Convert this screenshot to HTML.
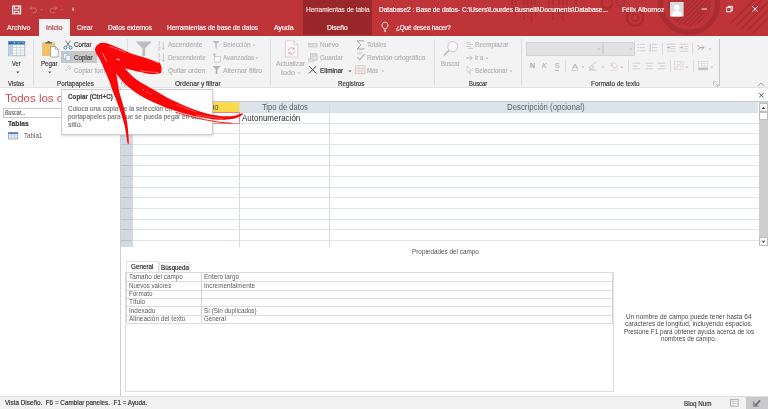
<!DOCTYPE html>
<html lang="es"><head><meta charset="utf-8"><title>Access</title>
<style>
html,body{margin:0;padding:0;background:#fff;}
body{width:768px;height:409px;overflow:hidden;font-family:"Liberation Sans",sans-serif;}
#clip{position:relative;width:768px;height:409px;overflow:hidden;background:#fff;}
#app{position:absolute;left:-8px;top:-8px;width:784px;height:425px;background:#fff;filter:blur(0.35px);}
#stage{left:8px;top:8px;width:768px;height:409px;}
#app div,#app svg,#app span{position:absolute;}
.t{white-space:pre;transform-origin:0 50%;z-index:2;-webkit-text-stroke:0.18px currentColor;}
#titlebar{left:-8px;top:-8px;width:784px;height:44px;background:#BE3438;}
#ctx{left:302.6px;top:-8px;width:69.8px;height:43.4px;background:#99272A;}
#tabsel{left:39px;top:19.3px;width:30.6px;height:17px;background:#F3F3F3;}
#ribbon{left:-8px;top:36px;width:784px;height:51.4px;background:#F3F3F3;border-bottom:1px solid #e2e2e2;}
.vsep{width:1px;top:39px;height:46px;background:#dedede;}
.t.l{-webkit-text-stroke:0;}
.hl{background:#c8c8c8;}
.combo{background:#e2e2e2;border:0.6px solid #d3d3d3;box-sizing:border-box;}
#status{left:-8px;top:396.2px;width:784px;height:20.8px;background:#F1F1F1;border-top:1px solid #dedede;box-sizing:border-box;}
#tooltip{left:61.3px;top:88.7px;width:151.6px;height:46px;background:#fff;border:0.7px solid #cdcdcd;box-sizing:border-box;box-shadow:0.5px 1px 2.2px rgba(0,0,0,0.17);z-index:3;}
#arrow{left:0;top:0;z-index:6;}
.rowl{left:131.8px;width:627px;height:1px;background:#dfe5ee;}
.pr{left:126.6px;width:486px;height:1px;background:#dcdcdc;}

</style></head>
<body>
<div id="clip"><div id="app"><div id="stage">
<div id="titlebar"></div>
<svg id="deco" width="768" height="36" viewBox="0 0 768 36" style="left:0;top:0">
<defs><pattern id="h" width="3.2" height="3.2" patternUnits="userSpaceOnUse" patternTransform="rotate(45)"><rect width="1.7" height="3.2" fill="#a62b30"/></pattern>
<clipPath id="cp"><rect x="0" y="0" width="768" height="36"/></clipPath></defs>
<g clip-path="url(#cp)" opacity="0.8">
<circle cx="689" cy="4" r="28.4" fill="none" stroke="#a62b30" stroke-width="5.4"/>
<circle cx="689" cy="4" r="22" fill="url(#h)"/>
<circle cx="635" cy="17.6" r="8.2" fill="none" stroke="#a62b30" stroke-width="2.4"/>
<circle cx="635" cy="17.6" r="3.4" fill="none" stroke="#a62b30" stroke-width="1.6"/>
<circle cx="620.5" cy="2" r="4" fill="none" stroke="#a62b30" stroke-width="1"/>
<path d="M731 23 L754 0 M736 26 L762 0 M741 29 L768 2 M747 31 L768 10 M753 33 L768 18" stroke="#a62b30" stroke-width="1.7" fill="none"/>
<path d="M512 0V12 M515.4 0V17 M524 0V20 M527.6 0V13 M531.4 0V22 M535.4 0V16 M549 0V13 M553 0V20 M559 0V15 M563 0V21 M567 0V11 M576 0V9" stroke="#a62b30" stroke-width="1.5" fill="none" stroke-dasharray="5 1.2 9 1.2"/>
<circle cx="607" cy="3" r="5.4" fill="none" stroke="#a62b30" stroke-width="1.6"/>
</g></svg>
<div id="ctx"></div>
<div id="tabsel"></div>
<svg width="80" height="20" viewBox="0 0 80 20" style="left:0;top:0">
<g fill="none" stroke="#fff" stroke-width="1.1">
<rect x="12.6" y="6" width="8" height="7.8"/>
<path d="M14.4 6v3h4.4v-3 M14.4 13.8v-2.6h4.4v2.6"/>
</g>
<g fill="none" stroke="#cf7378" stroke-width="0.9">
<path d="M30 8.2h4.2a2.3 2.3 0 0 1 0 4.6h-2.4 M31.8 6.2l-2 2 2 2"/>
<path d="M56.6 8.2h-4.2a2.3 2.3 0 0 0 0 4.6h2.4 M54.8 6.2l2 2-2 2"/>
</g>
<path d="M40.4 9.2l1.2 1.3 1.2-1.3z M60.6 9.2l1.2 1.3 1.2-1.3z" fill="#cf7378"/>
<path d="M72.2 8.2h2" stroke="#fff" stroke-width="0.7"/>
<path d="M72 9.4l1.2 1.5 1.2-1.5z" fill="#fff"/>
</svg>
<svg width="10" height="12" viewBox="0 0 10 12" style="left:380.4px;top:21.4px">
<path d="M5 1.2a3 3 0 0 1 1.7 5.5c-.3.3-.5.8-.5 1.3H3.8c0-.5-.2-1-.5-1.3A3 3 0 0 1 5 1.2z M3.9 9.4h2.2 M4.2 10.6h1.6" fill="none" stroke="#fff" stroke-width="0.8"/>
</svg>
<svg width="14" height="15" viewBox="0 0 14 15" style="left:670.4px;top:1.6px">
<rect x="0" y="0" width="13.6" height="14.4" fill="#dcdcdc"/>
<circle cx="6.8" cy="5.4" r="2.6" fill="#fff"/>
<path d="M1.8 14.4c0-4 2.2-5.6 5-5.6s5 1.6 5 5.6z" fill="#fff"/>
</svg>
<svg width="70" height="18" viewBox="0 0 70 18" style="left:698px;top:0">
<g fill="none" stroke="#fff" stroke-width="0.9">
<path d="M3.6 9h5.4"/>
<rect x="28.6" y="7.6" width="4.4" height="4.2"/>
<path d="M30 7.6v-1.3h4.4v4.2h-1.4"/>
<path d="M54.4 6.4l5.2 5.2 M59.6 6.4l-5.2 5.2"/>
</g></svg>
<div id="ribbon"></div>
<div class="vsep" style="left:32.7px"></div>
<div class="vsep" style="left:126.7px"></div>
<div class="vsep" style="left:269.7px"></div>
<div class="vsep" style="left:434.0px"></div>
<div class="vsep" style="left:521.0px"></div>
<div class="vsep" style="left:719.2px;background:#c9c9c9;top:38.5px;height:47px"></div>
<div class="hl" style="left:61.3px;top:51px;width:35.4px;height:12.3px"></div>
<svg width="18" height="16" viewBox="0 0 18 16" style="left:7.8px;top:41px">
<rect x="0.4" y="0.4" width="16.4" height="14.4" fill="#fdfdfd" stroke="#8fa3b8" stroke-width="0.7"/>
<rect x="0.4" y="3.4" width="4.2" height="11.4" fill="#c3d3e6"/>
<rect x="0.4" y="0.4" width="16.4" height="3.2" fill="#2d72b4"/>
<path d="M0.4 6.4h16.4 M0.4 9.2h16.4 M0.4 12h16.4 M4.6 3.6v11.2 M8.6 3.6v11.2 M12.8 3.6v11.2" stroke="#b4c0cc" stroke-width="0.6" fill="none"/>
<path d="M5.6 1.2l1 1.3 1-1.3z M9.8 1.2l1 1.3 1-1.3z M14 1.2l1 1.3 1-1.3z" fill="#cfe0f2"/>
</svg>
<svg width="6" height="4" viewBox="0 0 6 4" style="left:14.6px;top:71.2px"><path d="M1.2 0.6l1.6 1.9 1.6-1.9z" fill="#555"/></svg>
<svg width="18" height="18" viewBox="0 0 18 18" style="left:42.2px;top:39.8px">
<rect x="0.6" y="2.8" width="11.8" height="13" fill="#f4c266" stroke="#e0aa48" stroke-width="0.4"/>
<path d="M3.2 3.4v-1.2h2c0-1.7 2.8-1.7 2.8 0h2v1.2z" fill="#5f5f5f"/>
<path d="M8.6 6.4h4.8l2.8 2.8v7.8h-7.6z" fill="#fff" stroke="#8c8c8c" stroke-width="0.7"/>
<path d="M13.4 6.4v2.8h2.8" fill="none" stroke="#8c8c8c" stroke-width="0.7"/>
</svg>
<svg width="6" height="4" viewBox="0 0 6 4" style="left:47px;top:71.2px"><path d="M1.2 0.6l1.6 1.9 1.6-1.9z" fill="#555"/></svg>
<svg width="10" height="10" viewBox="0 0 10 10" style="left:62.6px;top:39.8px">
<path d="M2.6 0.6l4 6 M7.4 0.6l-4 6" stroke="#555" stroke-width="0.8" fill="none"/>
<circle cx="2.4" cy="7.6" r="1.5" fill="none" stroke="#2f79c0" stroke-width="0.9"/>
<circle cx="7.6" cy="7.6" r="1.5" fill="none" stroke="#2f79c0" stroke-width="0.9"/>
</svg>
<svg width="10" height="10" viewBox="0 0 10 10" style="left:63.2px;top:52.8px">
<rect x="0.6" y="0.6" width="3.8" height="4.8" fill="#e9f2fb" stroke="#8cb0d8" stroke-width="0.6"/>
<rect x="3" y="2.4" width="4.2" height="5.2" fill="#f1f7fd" stroke="#8cb0d8" stroke-width="0.6"/>
</svg>
<svg width="10" height="10" viewBox="0 0 10 10" style="left:64px;top:65.4px">
<path d="M1.4 6l2.4-2.4 M3.6 2.4l2 2 1.6-1.6-2-2z" fill="none" stroke="#c4c4c4" stroke-width="0.9"/>
</svg>
<svg width="6" height="6" viewBox="0 0 6 6" style="left:120.6px;top:81px"><path d="M0.6 3.6v-3h3 M2.4 2.4l2.6 2.6 M5.2 3v2.2h-2.2" fill="none" stroke="#9a9a9a" stroke-width="0.6"/></svg>
<svg width="6" height="6" viewBox="0 0 6 6" style="left:713.2px;top:81px"><path d="M0.6 3.6v-3h3 M2.4 2.4l2.6 2.6 M5.2 3v2.2h-2.2" fill="none" stroke="#9a9a9a" stroke-width="0.6"/></svg>
<svg width="18" height="16" viewBox="0 0 18 16" style="left:135px;top:40.6px">
<path d="M0.8 0.6h16l-6.6 6.6v7.8h-2.8v-7.8z" fill="#bdbdbd"/>
</svg>
<svg width="9" height="10" viewBox="0 0 9 10" style="left:157.4px;top:40.6px">
<path d="M1.4 0.8h1.6 M1.4 3.6h1.6 M2.2 0.8v2.8 M1.2 6h2l-2 3h2" stroke="#c2c2c2" stroke-width="0.7" fill="none"/>
<path d="M6.4 0.6v7.6 M5 6.8l1.4 1.8 1.4-1.8" stroke="#c2c2c2" stroke-width="0.8" fill="none"/>
</svg>
<svg width="9" height="10" viewBox="0 0 9 10" style="left:157.4px;top:53.4px">
<path d="M1.4 0.8h1.6 M1.4 3.6h1.6 M2.2 0.8v2.8 M1.2 6h2l-2 3h2" stroke="#c2c2c2" stroke-width="0.7" fill="none"/>
<path d="M6.4 0.6v7.6 M5 6.8l1.4 1.8 1.4-1.8" stroke="#c2c2c2" stroke-width="0.8" fill="none"/>
</svg>
<svg width="9" height="10" viewBox="0 0 9 10" style="left:157.4px;top:66px">
<path d="M1.6 4.2l5-2.6 M2.4 6.4l4 0" stroke="#c8c8c8" stroke-width="0.8" fill="none"/></svg>
<svg width="10" height="10" viewBox="0 0 10 10" style="left:212px;top:39.8px"><path d="M0.6 1h7l-2.8 3v4.6h-1.4v-4.6z" fill="#bdbdbd"/><path d="M7 6.6l1.6-3" stroke="#c8c8c8" stroke-width="0.7"/></svg>
<svg width="10" height="10" viewBox="0 0 10 10" style="left:212px;top:52.6px"><path d="M0.4 0.8h4l-1.5 1.6v1.8h-1v-1.8z" fill="#bdbdbd"/><rect x="2.6" y="3.6" width="6" height="5.4" fill="#f6f6f6" stroke="#c2c2c2" stroke-width="0.7"/></svg>
<svg width="10" height="10" viewBox="0 0 10 10" style="left:212px;top:65.4px"><path d="M0.6 1h8l-3.2 3.4v4.6h-1.6v-4.6z" fill="#b4b4b4"/></svg>
<svg width="4" height="3" viewBox="0 0 4 3" style="left:251.8px;top:43.8px"><path d="M0.4 0.4l1.5 1.8 1.5-1.8z" fill="#c0c0c0"/></svg>
<svg width="4" height="3" viewBox="0 0 4 3" style="left:255.4px;top:56.7px"><path d="M0.4 0.4l1.5 1.8 1.5-1.8z" fill="#c0c0c0"/></svg>
<svg width="4" height="3" viewBox="0 0 4 3" style="left:297.1px;top:71.8px"><path d="M0.4 0.4l1.5 1.8 1.5-1.8z" fill="#c0c0c0"/></svg>
<svg width="4" height="3" viewBox="0 0 4 3" style="left:348.3px;top:69.7px"><path d="M0.4 0.4l1.5 1.8 1.5-1.8z" fill="#555"/></svg>
<svg width="4" height="3" viewBox="0 0 4 3" style="left:380.5px;top:69.7px"><path d="M0.4 0.4l1.5 1.8 1.5-1.8z" fill="#c0c0c0"/></svg>
<svg width="4" height="3" viewBox="0 0 4 3" style="left:484.8px;top:56.7px"><path d="M0.4 0.4l1.5 1.8 1.5-1.8z" fill="#c0c0c0"/></svg>
<svg width="4" height="3" viewBox="0 0 4 3" style="left:508.7px;top:69.7px"><path d="M0.4 0.4l1.5 1.8 1.5-1.8z" fill="#c0c0c0"/></svg>
<svg width="16" height="18" viewBox="0 0 16 18" style="left:284px;top:39.8px">
<path d="M1.4 0.8h8.4l4 4v12.2h-12.4z" fill="#fbf7f8" stroke="#d9c3c6" stroke-width="0.7"/>
<path d="M9.8 0.8v4h4" fill="none" stroke="#d9c3c6" stroke-width="0.7"/>
<path d="M4.6 10.6a3 3 0 0 1 5.4-1.6 M10.6 11.2a3 3 0 0 1-5.4 1.6 M10.2 7.4v1.8h-1.8 M5 14.4v-1.8h1.8" fill="none" stroke="#c9a9ad" stroke-width="0.9"/>
</svg>
<svg width="10" height="10" viewBox="0 0 10 10" style="left:308.4px;top:39.8px"><rect x="0.6" y="3.4" width="8.4" height="3.6" fill="#e2e2e2" stroke="#c2c2c2" stroke-width="0.6"/><path d="M2 3.4v3.6 M5 3.4v3.6" stroke="#c2c2c2" stroke-width="0.5"/></svg>
<svg width="10" height="10" viewBox="0 0 10 10" style="left:308.4px;top:52.6px"><rect x="2.6" y="0.8" width="6.4" height="6.4" fill="#e6e6e6" stroke="#bbb" stroke-width="0.7"/><rect x="0.6" y="5.6" width="4.6" height="3.4" fill="#ddd" stroke="#c6c6c6" stroke-width="0.5"/><path d="M4.4 0.8v2.4h3v-2.4" fill="none" stroke="#bbb" stroke-width="0.6"/></svg>
<svg width="10" height="10" viewBox="0 0 10 10" style="left:308.4px;top:65.4px"><path d="M1 1.2l7.2 7.2 M8.2 1.2l-7.2 7.2" stroke="#444" stroke-width="1" fill="none"/></svg>
<svg width="10" height="10" viewBox="0 0 10 10" style="left:355.8px;top:39.8px"><path d="M8 1.6v-0.8h-6.8l3.6 4-3.6 4.2h6.8v-0.8" fill="none" stroke="#9c9c9c" stroke-width="0.9"/></svg>
<svg width="10" height="11" viewBox="0 0 10 11" style="left:356px;top:51.4px"><path d="M1.6 6.2l2.2 2.6 4.6-5.6" fill="none" stroke="#b0b0b0" stroke-width="1.1"/><path d="M1.4 1.2h1 M3.4 1.2h1 M5.4 1.2h1 M1.4 2.8h5" stroke="#c2c2c2" stroke-width="0.7"/></svg>
<svg width="11" height="10" viewBox="0 0 11 10" style="left:355.4px;top:65.2px"><rect x="0.6" y="0.8" width="9.4" height="8" fill="#f8f0f0" stroke="#c9b9ba" stroke-width="0.6"/><path d="M0.6 3.4h9.4 M0.6 6h9.4 M3.8 0.8v8 M7 0.8v8" stroke="#c9b9ba" stroke-width="0.5"/></svg>
<svg width="18" height="18" viewBox="0 0 18 18" style="left:441.6px;top:39.6px">
<circle cx="10.8" cy="6.6" r="5" fill="#fbf6f7" stroke="#c9bfc0" stroke-width="0.9"/>
<path d="M7 10.4l-5 5" stroke="#b9b9b9" stroke-width="1.5" fill="none"/>
</svg>
<svg width="9" height="10" viewBox="0 0 9 10" style="left:464.6px;top:39.8px"><path d="M1 2.4h5 M2 4.4h6 M1 6.6h5 M3 8.4h5" stroke="#c0c0c0" stroke-width="0.8"/></svg>
<svg width="9" height="10" viewBox="0 0 9 10" style="left:464.6px;top:52.6px"><path d="M1 5h6 M4.8 2.6l2.4 2.4-2.4 2.4" stroke="#b4b4b4" stroke-width="0.9" fill="none"/></svg>
<svg width="9" height="10" viewBox="0 0 9 10" style="left:464.6px;top:65.4px"><path d="M2 1l0 6.4 1.6-1.4 1.2 2.8 1-.4-1.2-2.8h2.2z" fill="#fafafa" stroke="#c0c0c0" stroke-width="0.6"/></svg>
<div class="combo" style="left:525.8px;top:41.6px;width:77px;height:14.2px"></div>
<div class="combo" style="left:603.4px;top:41.6px;width:31.2px;height:14.2px"></div>
<svg width="4" height="3" viewBox="0 0 4 3" style="left:596.7px;top:47.9px"><path d="M0.4 0.4l1.5 1.8 1.5-1.8z" fill="#c0c0c0"/></svg>
<svg width="4" height="3" viewBox="0 0 4 3" style="left:628.7px;top:47.9px"><path d="M0.4 0.4l1.5 1.8 1.5-1.8z" fill="#c0c0c0"/></svg>
<div style="left:554.6px;top:69.8px;width:4.8px;height:0.6px;background:#b8b8b8"></div>
<div style="left:571.4px;top:70.2px;width:7px;height:1px;background:#dccfcf"></div>
<svg width="9" height="10" viewBox="0 0 9 10" style="left:637px;top:43.2px"><path d="M0.6 1.4h1.2 M0.6 4.6h1.2 M0.6 7.8h1.2" stroke="#b8b8b8" stroke-width="1"/><path d="M3 1.4h5 M3 4.6h5 M3 7.8h5" stroke="#c6c6c6" stroke-width="0.8"/></svg>
<svg width="9" height="10" viewBox="0 0 9 10" style="left:649.2px;top:43.2px"><path d="M1.2 0.6v8.2" stroke="#b8b8b8" stroke-width="0.8"/><path d="M3 1.4h5 M3 4.6h5 M3 7.8h5" stroke="#c6c6c6" stroke-width="0.8"/></svg>
<svg width="10" height="10" viewBox="0 0 10 10" style="left:665.8px;top:43.4px"><path d="M0.6 1.2h8.6 M4.6 3.6h4.6 M4.6 5.8h4.6 M0.6 8.2h8.6" stroke="#c6c6c6" stroke-width="0.8"/><path d="M0.6 4.6h3 M2.4 3.4l1.4 1.2-1.4 1.2" stroke="#a8a8a8" stroke-width="0.8" fill="none"/></svg>
<svg width="10" height="10" viewBox="0 0 10 10" style="left:678.6px;top:43.4px"><path d="M0.6 1.2h8.6 M4.6 3.6h4.6 M4.6 5.8h4.6 M0.6 8.2h8.6" stroke="#c6c6c6" stroke-width="0.8"/><path d="M0.6 4.6h3 M2.4 3.4l1.4 1.2-1.4 1.2" stroke="#a8a8a8" stroke-width="0.8" fill="none"/></svg>
<svg width="8" height="8" viewBox="0 0 8 8" style="left:696.8px;top:44.4px"><path d="M0.8 1.2l2.2 2.4-2.2 2.4 M3 3.6h3.8 M5 1.6l1.8 2-1.8 2" stroke="#9a9a9a" stroke-width="0.8" fill="none"/></svg>
<svg width="4" height="3" viewBox="0 0 4 3" style="left:707.7px;top:48.3px"><path d="M0.4 0.4l1.5 1.8 1.5-1.8z" fill="#c0c0c0"/></svg>
<div style="left:662.3px;top:42.6px;width:0.7px;height:12px;background:#dcdcdc"></div>
<div style="left:692.4px;top:42.6px;width:0.7px;height:12px;background:#dcdcdc"></div>
<div style="left:565.2px;top:60.4px;width:0.7px;height:12px;background:#dcdcdc"></div>
<div style="left:627.9px;top:60.4px;width:0.7px;height:12px;background:#dcdcdc"></div>
<div style="left:670.2px;top:60.4px;width:0.7px;height:12px;background:#dcdcdc"></div>
<div style="left:693.1px;top:60.4px;width:0.7px;height:12px;background:#dcdcdc"></div>
<svg width="4" height="3" viewBox="0 0 4 3" style="left:581.3px;top:65.5px"><path d="M0.4 0.4l1.5 1.8 1.5-1.8z" fill="#c0c0c0"/></svg>
<svg width="4" height="3" viewBox="0 0 4 3" style="left:600.7px;top:65.5px"><path d="M0.4 0.4l1.5 1.8 1.5-1.8z" fill="#c0c0c0"/></svg>
<svg width="4" height="3" viewBox="0 0 4 3" style="left:619.9px;top:65.5px"><path d="M0.4 0.4l1.5 1.8 1.5-1.8z" fill="#c0c0c0"/></svg>
<svg width="4" height="3" viewBox="0 0 4 3" style="left:684.9px;top:65.5px"><path d="M0.4 0.4l1.5 1.8 1.5-1.8z" fill="#c0c0c0"/></svg>
<svg width="4" height="3" viewBox="0 0 4 3" style="left:709.9px;top:65.5px"><path d="M0.4 0.4l1.5 1.8 1.5-1.8z" fill="#c0c0c0"/></svg>
<svg width="10" height="10" viewBox="0 0 10 10" style="left:588.4px;top:61.2px"><path d="M1 6.6l3-2.4 1.6 1.4-2.6 2.8z M4.6 3.6l3.6-2.6 M1 9h7" stroke="#bdbdbd" stroke-width="0.8" fill="none"/></svg>
<svg width="10" height="10" viewBox="0 0 10 10" style="left:608.6px;top:61px"><path d="M2 4.2l3-3 3.4 3.4-3 3z M1.4 2l3 3" stroke="#cfc3c3" stroke-width="0.8" fill="#f8f2f2"/><path d="M8.6 6.4c.6 1 .6 1.6 0 1.8s-.6-.8 0-1.8z" fill="#d8bcbc"/><path d="M1 9.4h7.6" stroke="#ead8d8" stroke-width="0.8"/></svg>
<svg width="9" height="10" viewBox="0 0 9 10" style="left:632.0px;top:62.0px"><path d="M0.6 1.2h7.6 M0.6 4.0h5.0 M0.6 6.8h7.6 " stroke="#c6c6c6" stroke-width="0.8" fill="none"/></svg>
<svg width="9" height="10" viewBox="0 0 9 10" style="left:645.4px;top:62.0px"><path d="M0.6 1.2h7.6 M1.8 4.0h5.0 M0.6 6.8h7.6 " stroke="#c6c6c6" stroke-width="0.8" fill="none"/></svg>
<svg width="9" height="10" viewBox="0 0 9 10" style="left:657.2px;top:62.0px"><path d="M0.6 1.2h7.6 M3.2 4.0h5.0 M0.6 6.8h7.6 " stroke="#c6c6c6" stroke-width="0.8" fill="none"/></svg>
<svg width="10" height="10" viewBox="0 0 10 10" style="left:674.4px;top:61.4px"><rect x="0.6" y="0.8" width="8.4" height="7.6" fill="#faf6f6" stroke="#d6cacb" stroke-width="0.5"/><path d="M0.6 3.4h8.4 M0.6 5.8h8.4 M3.4 0.8v7.6 M6.2 0.8v7.6" stroke="#ddd2d3" stroke-width="0.5"/><path d="M1 8l6-6" stroke="#e3c3c6" stroke-width="0.7"/></svg>
<svg width="11" height="10" viewBox="0 0 11 10" style="left:697.8px;top:61px"><rect x="0.6" y="0.6" width="9.2" height="8.4" fill="#fbfbfb" stroke="#c9c9c9" stroke-width="0.5"/><path d="M0.6 2.6h9.2 M0.6 4.8h9.2" stroke="#cfcfcf" stroke-width="0.5"/><rect x="0.6" y="6.4" width="9.2" height="2.6" fill="#c2c2c2"/><path d="M3.6 0.6v5.6 M6.8 0.6v5.6" stroke="#cfcfcf" stroke-width="0.5"/></svg>
<svg width="8" height="5" viewBox="0 0 8 5" style="left:757px;top:81.8px"><path d="M0.8 4l3.2-3 3.2 3" stroke="#8a8a8a" stroke-width="0.8" fill="none"/></svg>
<div style="left:3.4px;top:107.5px;width:112px;height:10px;border:0.7px solid #c8c8c8;box-sizing:border-box;background:#fff"></div>
<svg width="11" height="8" viewBox="0 0 11 8" style="left:8.2px;top:132px"><rect x="0.4" y="0.4" width="9.4" height="6.6" fill="#fff" stroke="#6f86a6" stroke-width="0.6"/><rect x="0.4" y="0.4" width="9.4" height="1.8" fill="#4f7fbd"/><path d="M0.4 3.8h9.4 M0.4 5.4h9.4 M3.4 2.2v4.8 M6.6 2.2v4.8" stroke="#9db2cc" stroke-width="0.5"/></svg>
<div style="left:119.8px;top:88.4px;width:1.2px;height:308px;background:#cfcfcf"></div>
<svg width="7" height="7" viewBox="0 0 7 7" style="left:757.8px;top:91.6px"><path d="M1.2 1.2l4.2 4.2 M5.4 1.2l-4.2 4.2" stroke="#444" stroke-width="0.9"/></svg>
<div style="left:121px;top:101.2px;width:655px;height:1.3px;background:#c4c9d1"></div>
<div style="left:121px;top:102.4px;width:637.4px;height:9.9px;background:#DDE3EB"></div>
<div style="left:131.8px;top:102px;width:107.6px;height:10.3px;background:linear-gradient(#f8db58,#fbd843)"></div>
<div style="left:121px;top:101.5px;width:10.8px;height:145.2px;background:#d3d9e1"></div>
<div class="rowl" style="top:122.8px"></div>
<div style="left:121px;top:122.8px;width:10.8px;height:1px;background:#b9c2cd"></div>
<div class="rowl" style="top:133.4px"></div>
<div style="left:121px;top:133.4px;width:10.8px;height:1px;background:#b9c2cd"></div>
<div class="rowl" style="top:144.1px"></div>
<div style="left:121px;top:144.1px;width:10.8px;height:1px;background:#b9c2cd"></div>
<div class="rowl" style="top:154.7px"></div>
<div style="left:121px;top:154.7px;width:10.8px;height:1px;background:#b9c2cd"></div>
<div class="rowl" style="top:165.3px"></div>
<div style="left:121px;top:165.3px;width:10.8px;height:1px;background:#b9c2cd"></div>
<div class="rowl" style="top:175.9px"></div>
<div style="left:121px;top:175.9px;width:10.8px;height:1px;background:#b9c2cd"></div>
<div class="rowl" style="top:186.6px"></div>
<div style="left:121px;top:186.6px;width:10.8px;height:1px;background:#b9c2cd"></div>
<div class="rowl" style="top:197.2px"></div>
<div style="left:121px;top:197.2px;width:10.8px;height:1px;background:#b9c2cd"></div>
<div class="rowl" style="top:207.8px"></div>
<div style="left:121px;top:207.8px;width:10.8px;height:1px;background:#b9c2cd"></div>
<div class="rowl" style="top:218.5px"></div>
<div style="left:121px;top:218.5px;width:10.8px;height:1px;background:#b9c2cd"></div>
<div class="rowl" style="top:229.1px"></div>
<div style="left:121px;top:229.1px;width:10.8px;height:1px;background:#b9c2cd"></div>
<div class="rowl" style="top:239.7px"></div>
<div style="left:121px;top:239.7px;width:10.8px;height:1px;background:#b9c2cd"></div>
<div style="left:121px;top:112px;width:637.4px;height:0.6px;background:#d9dfe8"></div>
<div style="left:131.6px;top:101.5px;width:0.8px;height:145px;background:#d5dbe3"></div>
<div style="left:239.4px;top:101.5px;width:0.8px;height:145px;background:#d5dbe3"></div>
<div style="left:329.2px;top:101.5px;width:0.8px;height:145px;background:#d5dbe3"></div>
<div style="left:131.8px;top:112.4px;width:108px;height:11.2px;border:0.7px solid #ea8389;box-sizing:border-box"></div>
<div style="left:758.6px;top:101.5px;width:17.4px;height:144.4px;background:#cecece"></div>
<div style="left:759px;top:103px;width:8.6px;height:8.8px;background:#f4f4f4;border:0.5px solid #bdbdbd;box-sizing:border-box"></div>
<div style="left:759px;top:112px;width:8.6px;height:8.4px;background:#fff;border:0.5px solid #bdbdbd;box-sizing:border-box"></div>
<div style="left:759px;top:237.4px;width:8.6px;height:8.2px;background:#f4f4f4;border:0.5px solid #bdbdbd;box-sizing:border-box"></div>
<svg width="5" height="4" viewBox="0 0 5 4" style="left:761px;top:105.6px"><path d="M0.6 3l1.9-2.2 1.9 2.2z" fill="#555"/></svg>
<svg width="5" height="4" viewBox="0 0 5 4" style="left:761px;top:239.8px"><path d="M0.6 0.8l1.9 2.2 1.9-2.2z" fill="#555"/></svg>
<div style="left:125px;top:272px;width:488.6px;height:120px;border:0.8px solid #dedede;box-sizing:border-box;background:#fff"></div>
<div style="left:126px;top:260.6px;width:33.2px;height:12.2px;border:0.8px solid #e0e0e0;border-bottom:none;box-sizing:border-box;background:#fff"></div>
<div style="left:159.2px;top:262.4px;width:31.2px;height:9.8px;border:0.8px solid #e6e6e6;border-bottom:none;box-sizing:border-box;background:#fafafa"></div>
<div class="pr" style="top:272.4px"></div>
<div class="pr" style="top:281.3px"></div>
<div class="pr" style="top:289.7px"></div>
<div class="pr" style="top:298.0px"></div>
<div class="pr" style="top:306.4px"></div>
<div class="pr" style="top:314.8px"></div>
<div class="pr" style="top:323.2px"></div>
<div style="left:201.2px;top:272.6px;width:0.8px;height:50.6px;background:#d6d6d6"></div>
<div style="left:126.4px;top:272.6px;width:0.8px;height:50.6px;background:#d6d6d6"></div>
<div style="left:612.4px;top:272.6px;width:0.8px;height:50.6px;background:#d6d6d6"></div>
<div id="status"></div>
<div style="left:745.6px;top:397px;width:30.4px;height:20px;background:#c9c9c9"></div>
<svg width="9" height="8" viewBox="0 0 9 8" style="left:729.6px;top:399.4px"><rect x="0.5" y="0.5" width="7.6" height="6.6" fill="#fafafa" stroke="#8d8d8d" stroke-width="0.6"/><path d="M0.5 2.4h7.6 M0.5 4.6h7.6 M3 0.5v6.6" stroke="#a5a5a5" stroke-width="0.5"/></svg>
<svg width="10" height="9" viewBox="0 0 10 9" style="left:752px;top:398.8px"><path d="M0.8 1.6v6.2h6.4z" fill="#8d99a6"/><path d="M3 5.8l4.4-5 1.3 1.2-4.5 4.9-1.6.6z" fill="#6f6f6f"/></svg>
<div id="tooltip"></div>
<span class="t" style="left:305.9px;top:5.64px;font-size:6.6px;line-height:8.58px;color:#f3d9da;transform:scaleX(0.9819);">Herramientas de tabla</span>
<span class="t" style="left:378.6px;top:5.64px;font-size:6.6px;line-height:8.58px;color:#ffffff;transform:scaleX(0.9929);">Database2 : Base de datos- C:\Users\Lourdes Busnelli\Documents\Database...</span>
<span class="t" style="left:621.9px;top:5.52px;font-size:6.8px;line-height:8.84px;color:#ffffff;transform:scaleX(0.9906);">Félix Albornoz</span>
<span class="t" style="left:7.4px;top:23.49px;font-size:7.0px;line-height:9.10px;color:#ffffff;transform:scaleX(1.0024);">Archivo</span>
<span class="t" style="left:45.8px;top:23.49px;font-size:7.0px;line-height:9.10px;color:#b83a3f;transform:scaleX(1.0096);">Inicio</span>
<span class="t" style="left:77.4px;top:23.49px;font-size:7.0px;line-height:9.10px;color:#ffffff;transform:scaleX(0.8963);">Crear</span>
<span class="t" style="left:108.2px;top:23.49px;font-size:7.0px;line-height:9.10px;color:#ffffff;transform:scaleX(0.9343);">Datos externos</span>
<span class="t" style="left:167.2px;top:23.49px;font-size:7.0px;line-height:9.10px;color:#ffffff;transform:scaleX(0.9327);">Herramientas de base de datos</span>
<span class="t" style="left:273.5px;top:23.49px;font-size:7.0px;line-height:9.10px;color:#ffffff;transform:scaleX(0.9881);">Ayuda</span>
<span class="t" style="left:326.5px;top:23.49px;font-size:7.0px;line-height:9.10px;color:#ffffff;transform:scaleX(0.9497);">Diseño</span>
<span class="t" style="left:395.8px;top:23.49px;font-size:7.0px;line-height:9.10px;color:#ffffff;transform:scaleX(0.8857);">¿Qué desea hacer?</span>
<span class="t" style="left:12.2px;top:60.12px;font-size:6.8px;line-height:8.84px;color:#3b3b3b;transform:scaleX(0.8429);">Ver</span>
<span class="t" style="left:7.9px;top:79.64px;font-size:6.6px;line-height:8.58px;color:#3b3b3b;transform:scaleX(0.9079);">Vistas</span>
<span class="t" style="left:41.1px;top:60.12px;font-size:6.8px;line-height:8.84px;color:#3b3b3b;transform:scaleX(0.9096);">Pegar</span>
<span class="t" style="left:73.8px;top:41.12px;font-size:6.8px;line-height:8.84px;color:#3b3b3b;transform:scaleX(0.9317);">Cortar</span>
<span class="t" style="left:73.8px;top:53.72px;font-size:6.8px;line-height:8.84px;color:#3b3b3b;transform:scaleX(0.9285);">Copiar</span>
<span class="t" style="left:73.8px;top:66.62px;font-size:6.8px;line-height:8.84px;color:#b4b4b4;transform:scaleX(0.9388);">Copiar formato</span>
<span class="t" style="left:57.0px;top:79.64px;font-size:6.6px;line-height:8.58px;color:#3b3b3b;transform:scaleX(0.9470);">Portapapeles</span>
<span class="t" style="left:168.0px;top:40.92px;font-size:6.8px;line-height:8.84px;color:#b4b4b4;transform:scaleX(0.9581);">Ascendente</span>
<span class="t" style="left:168.0px;top:53.72px;font-size:6.8px;line-height:8.84px;color:#b4b4b4;transform:scaleX(0.9410);">Descendente</span>
<span class="t" style="left:168.0px;top:66.62px;font-size:6.8px;line-height:8.84px;color:#b4b4b4;transform:scaleX(0.9873);">Quitar orden</span>
<span class="t" style="left:175.2px;top:79.64px;font-size:6.6px;line-height:8.58px;color:#3b3b3b;transform:scaleX(0.9954);">Ordenar y filtrar</span>
<span class="t" style="left:222.6px;top:40.92px;font-size:6.8px;line-height:8.84px;color:#b4b4b4;transform:scaleX(0.9327);">Selección</span>
<span class="t" style="left:222.6px;top:53.72px;font-size:6.8px;line-height:8.84px;color:#b4b4b4;transform:scaleX(0.9279);">Avanzadas</span>
<span class="t" style="left:222.6px;top:66.62px;font-size:6.8px;line-height:8.84px;color:#b4b4b4;transform:scaleX(1.0122);">Alternar filtro</span>
<span class="t" style="left:275.6px;top:59.72px;font-size:6.8px;line-height:8.84px;color:#b4b4b4;transform:scaleX(0.9717);">Actualizar</span>
<span class="t" style="left:281.4px;top:68.72px;font-size:6.8px;line-height:8.84px;color:#b4b4b4;transform:scaleX(1.0503);">todo</span>
<span class="t" style="left:319.8px;top:40.92px;font-size:6.8px;line-height:8.84px;color:#b4b4b4;transform:scaleX(0.9463);">Nuevo</span>
<span class="t" style="left:319.8px;top:53.72px;font-size:6.8px;line-height:8.84px;color:#b4b4b4;transform:scaleX(0.9143);">Guardar</span>
<span class="t" style="left:319.8px;top:66.62px;font-size:6.8px;line-height:8.84px;color:#2b2b2b;transform:scaleX(0.9445);">Eliminar</span>
<span class="t" style="left:367.3px;top:40.92px;font-size:6.8px;line-height:8.84px;color:#b4b4b4;transform:scaleX(0.9004);">Totales</span>
<span class="t" style="left:367.3px;top:53.72px;font-size:6.8px;line-height:8.84px;color:#b4b4b4;transform:scaleX(0.9737);">Revisión ortográfica</span>
<span class="t" style="left:367.3px;top:66.62px;font-size:6.8px;line-height:8.84px;color:#b4b4b4;transform:scaleX(0.8720);">Más</span>
<span class="t" style="left:338.4px;top:79.64px;font-size:6.6px;line-height:8.58px;color:#3b3b3b;transform:scaleX(0.9476);">Registros</span>
<span class="t" style="left:440.8px;top:59.72px;font-size:6.8px;line-height:8.84px;color:#b4b4b4;transform:scaleX(0.8839);">Buscar</span>
<span class="t" style="left:474.8px;top:40.92px;font-size:6.8px;line-height:8.84px;color:#b4b4b4;transform:scaleX(0.9112);">Reemplazar</span>
<span class="t" style="left:474.8px;top:53.72px;font-size:6.8px;line-height:8.84px;color:#b4b4b4;transform:scaleX(0.8445);">Ir a</span>
<span class="t" style="left:474.8px;top:66.62px;font-size:6.8px;line-height:8.84px;color:#b4b4b4;transform:scaleX(0.9179);">Seleccionar</span>
<span class="t" style="left:468.5px;top:79.64px;font-size:6.6px;line-height:8.58px;color:#3b3b3b;transform:scaleX(0.8865);">Buscar</span>
<span class="t" style="left:529.6px;top:62.32px;font-size:6.8px;line-height:8.84px;color:#b4b4b4;font-weight:bold;transform:scaleX(1.0768);">N</span>
<span class="t" style="left:541.7px;top:62.32px;font-size:6.8px;line-height:8.84px;color:#b4b4b4;font-style:italic;transform:scaleX(1.0337);">K</span>
<span class="t" style="left:554.6px;top:62.32px;font-size:6.8px;line-height:8.84px;color:#b4b4b4;transform:scaleX(1.0337);">S</span>
<span class="t" style="left:571.8px;top:61.81px;font-size:7.6px;line-height:9.88px;color:#b4b4b4;transform:scaleX(1.2012);">A</span>
<span class="t" style="left:591.4px;top:79.64px;font-size:6.6px;line-height:8.58px;color:#3b3b3b;transform:scaleX(0.9771);">Formato de texto</span>
<span class="t l" style="left:5.4px;top:90.67px;font-size:11.8px;line-height:15.34px;color:#cc4a50;transform:scaleX(0.9751);">Todos los o</span>
<span class="t" style="left:4.9px;top:109.37px;font-size:6.4px;line-height:8.32px;color:#666;font-style:italic;transform:scaleX(0.8205);">Buscar...</span>
<span class="t" style="left:8.1px;top:120.45px;font-size:6.9px;line-height:8.97px;color:#3a3a3a;font-weight:bold;transform:scaleX(0.9705);">Tablas</span>
<span class="t l" style="left:24.0px;top:132.34px;font-size:6.6px;line-height:8.58px;color:#5a5a5a;transform:scaleX(0.9415);">Tabla1</span>
<span class="t" style="left:67.7px;top:93.22px;font-size:6.8px;line-height:8.84px;color:#444;font-weight:bold;z-index:4;transform:scaleX(0.9252);">Copiar (Ctrl+C)</span>
<span class="t" style="left:67.7px;top:105.05px;font-size:6.9px;line-height:8.97px;color:#7a7a7a;z-index:4;transform:scaleX(0.9447);">Coloca una copia de la selección en el</span>
<span class="t" style="left:67.7px;top:113.15px;font-size:6.9px;line-height:8.97px;color:#7a7a7a;z-index:4;transform:scaleX(0.9455);">portapapeles para que se pueda pegar en otro</span>
<span class="t" style="left:67.7px;top:121.25px;font-size:6.9px;line-height:8.97px;color:#7a7a7a;z-index:4;transform:scaleX(1.0302);">sitio.</span>
<span class="t l" style="left:152.8px;top:102.21px;font-size:8.4px;line-height:10.92px;color:#55503a;transform:scaleX(0.9284);">Nombre del campo</span>
<span class="t l" style="left:261.7px;top:102.21px;font-size:8.4px;line-height:10.92px;color:#59616b;transform:scaleX(0.9098);">Tipo de datos</span>
<span class="t l" style="left:506.5px;top:102.21px;font-size:8.4px;line-height:10.92px;color:#59616b;transform:scaleX(0.9353);">Descripción (opcional)</span>
<span class="t l" style="left:241.9px;top:113.21px;font-size:8.4px;line-height:10.92px;color:#2c2c2c;transform:scaleX(0.9557);">Autonumeración</span>
<span class="t l" style="left:411.6px;top:248.24px;font-size:6.6px;line-height:8.58px;color:#505050;transform:scaleX(0.9642);">Propiedades del campo</span>
<span class="t" style="left:131.4px;top:263.02px;font-size:6.8px;line-height:8.84px;color:#2a2a2a;transform:scaleX(0.9302);">General</span>
<span class="t" style="left:160.7px;top:264.02px;font-size:6.8px;line-height:8.84px;color:#2a2a2a;transform:scaleX(0.9110);">Búsqueda</span>
<span class="t l" style="left:128.8px;top:273.18px;font-size:6.7px;line-height:8.71px;color:#5a5a5a;transform:scaleX(0.9537);">Tamaño del campo</span>
<span class="t l" style="left:203.6px;top:273.18px;font-size:6.7px;line-height:8.71px;color:#5a5a5a;transform:scaleX(0.9660);">Entero largo</span>
<span class="t l" style="left:128.8px;top:281.56px;font-size:6.7px;line-height:8.71px;color:#5a5a5a;transform:scaleX(0.9155);">Nuevos valores</span>
<span class="t l" style="left:203.6px;top:281.56px;font-size:6.7px;line-height:8.71px;color:#5a5a5a;transform:scaleX(0.9527);">Incrementalmente</span>
<span class="t l" style="left:128.8px;top:289.94px;font-size:6.7px;line-height:8.71px;color:#5a5a5a;transform:scaleX(0.9435);">Formato</span>
<span class="t l" style="left:128.8px;top:298.32px;font-size:6.7px;line-height:8.71px;color:#5a5a5a;transform:scaleX(0.9681);">Título</span>
<span class="t l" style="left:128.8px;top:306.70px;font-size:6.7px;line-height:8.71px;color:#5a5a5a;transform:scaleX(0.9589);">Indexado</span>
<span class="t l" style="left:203.6px;top:306.70px;font-size:6.7px;line-height:8.71px;color:#5a5a5a;transform:scaleX(0.9369);">Sí (Sin duplicados)</span>
<span class="t l" style="left:128.8px;top:315.08px;font-size:6.7px;line-height:8.71px;color:#5a5a5a;transform:scaleX(0.9741);">Alineación del texto</span>
<span class="t l" style="left:203.6px;top:315.08px;font-size:6.7px;line-height:8.71px;color:#5a5a5a;transform:scaleX(0.9161);">General</span>
<span class="t l" style="left:625.9px;top:312.58px;font-size:6.7px;line-height:8.71px;color:#4a4a4a;transform:scaleX(0.9699);">Un nombre de campo puede tener hasta 64</span>
<span class="t l" style="left:624.7px;top:320.28px;font-size:6.7px;line-height:8.71px;color:#4a4a4a;transform:scaleX(0.9695);">caracteres de longitud, incluyendo espacios.</span>
<span class="t l" style="left:623.5px;top:327.78px;font-size:6.7px;line-height:8.71px;color:#4a4a4a;transform:scaleX(0.9472);">Presione F1 para obtener ayuda acerca de los</span>
<span class="t l" style="left:660.9px;top:334.98px;font-size:6.7px;line-height:8.71px;color:#4a4a4a;transform:scaleX(0.9389);">nombres de campo.</span>
<span class="t" style="left:4.5px;top:399.48px;font-size:6.7px;line-height:8.71px;color:#333;transform:scaleX(0.9474);">Vista Diseño.  F6 = Cambiar paneles.  F1 = Ayuda.</span>
<span class="t" style="left:684.1px;top:399.58px;font-size:6.7px;line-height:8.71px;color:#333;transform:scaleX(0.9396);">Bloq Num</span>
<svg id="arrow" width="768" height="409" viewBox="0 0 768 409">
<path fill="#FA0608" d="M94.8 49.5 C95.0 49.0 95.4 47.3 96.0 46.4 C96.6 45.5 97.5 44.8 98.4 44.2 C99.3 43.6 100.1 42.9 101.5 42.8 C102.9 42.6 103.8 42.4 106.8 43.3 C109.8 44.2 115.5 46.7 119.3 48.3 C123.1 49.9 126.2 51.6 129.7 52.9 C133.1 54.2 136.5 55.2 140.0 56.3 C143.5 57.4 147.2 58.3 150.5 59.4 C153.8 60.5 158.3 62.3 159.9 62.9 C160.1 63.5 160.9 64.8 161.2 66.2 C161.5 67.6 161.7 70.0 161.5 71.2 C161.3 72.4 160.2 73.2 159.9 73.6 C158.3 73.7 153.8 74.4 150.5 74.1 C147.2 73.8 143.5 72.8 140.0 72.0 C136.5 71.2 132.2 70.0 129.7 69.4 C127.2 68.8 125.6 68.7 124.8 68.6 C126.2 70.0 130.3 74.6 133.5 77.2 C136.7 79.8 140.4 82.1 144.0 84.3 C147.6 86.5 151.3 88.5 155.0 90.6 C158.7 92.7 162.4 95.1 166.0 97.0 C169.6 98.9 173.0 100.5 176.5 102.1 C180.0 103.7 183.5 105.3 187.0 106.8 C190.5 108.2 193.9 109.6 197.3 110.8 C200.8 112.0 203.9 112.9 207.7 113.8 C211.5 114.7 216.4 115.5 220.0 115.9 C223.6 116.3 226.3 116.4 229.0 116.3 C231.7 116.2 234.2 115.8 236.0 115.4 C237.8 115.0 238.5 114.5 239.8 114.1 C241.1 113.7 243.0 113.1 243.6 112.9 C243.3 113.2 242.8 114.3 242.0 115.0 C241.2 115.7 240.4 116.2 238.7 116.9 C237.0 117.6 234.3 118.5 231.6 119.0 C228.9 119.5 225.4 119.7 222.3 119.7 C219.2 119.7 216.6 119.7 212.9 119.2 C209.2 118.8 203.5 117.6 200.0 117.0 C196.5 116.4 194.8 116.1 192.0 115.5 C189.2 114.9 187.2 114.4 183.3 113.2 C179.4 112.0 173.5 110.4 168.6 108.6 C163.7 106.8 158.2 104.2 154.0 102.4 C149.8 100.6 147.1 99.4 143.7 97.5 C140.3 95.6 136.7 93.2 133.5 90.9 C130.3 88.6 127.2 86.0 124.7 83.6 C122.2 81.2 120.0 78.3 118.6 76.6 C117.2 74.9 116.6 73.8 116.2 73.2 C116.4 74.6 117.1 78.4 117.6 81.5 C118.1 84.6 118.5 88.5 119.3 92.0 C120.1 95.5 121.5 98.9 122.4 102.4 C123.4 105.9 124.2 109.3 125.0 112.8 C125.8 116.3 126.8 120.0 127.3 123.2 C127.8 126.4 127.9 128.6 128.2 132.0 C128.5 135.4 128.8 141.7 128.9 143.6 C128.7 143.5 128.1 145.1 127.6 143.2 C127.1 141.3 126.4 135.3 125.8 132.0 C125.2 128.7 124.8 126.4 124.0 123.2 C123.2 120.0 121.9 116.3 120.8 112.8 C119.7 109.3 118.5 105.9 117.2 102.4 C115.9 98.9 114.2 95.2 113.0 92.0 C111.8 88.8 111.4 86.7 110.0 83.0 C108.6 79.3 106.2 73.8 104.6 70.0 C103.0 66.2 101.5 62.7 100.2 60.0 C98.9 57.3 97.5 55.8 96.6 54.0 C95.7 52.2 95.1 50.2 94.8 49.5 Z"/>
<path fill="none" stroke="#FA0608" stroke-width="0.9" stroke-linecap="round" d="M176.0 112.4 C178.2 113.0 185.0 115.1 189.0 116.2 C193.0 117.3 196.0 118.0 200.0 118.8 C204.0 119.6 209.0 120.5 213.0 121.2 C217.0 121.9 221.0 122.4 224.0 122.7 C227.0 123.0 229.8 123.0 231.0 123.1 "/>
<g fill="none" stroke="#ffd9d9" stroke-linecap="round" opacity="0.85">
<path d="M109.6 46.4L125 52.2" stroke-width="0.5"/>
<path d="M102.4 53L106.6 61.4" stroke-width="0.7"/>
<path d="M117 59.2L119.4 59.8" stroke-width="1.2"/>
<path d="M140.5 70.9L158 72.6" stroke-width="0.5"/>
<path d="M145 57.2L158.6 63.2" stroke-width="0.4"/>
<path d="M143 89.6l.6.4M146.6 91.6l.6.4M150 93.4l.8.4" stroke-width="0.8"/>
<path d="M176 104.6L196 112" stroke-width="0.4"/>
<path d="M196 115L222 118.6" stroke-width="0.4"/>
</g>
</svg>
</div></div></div>
</body></html>
